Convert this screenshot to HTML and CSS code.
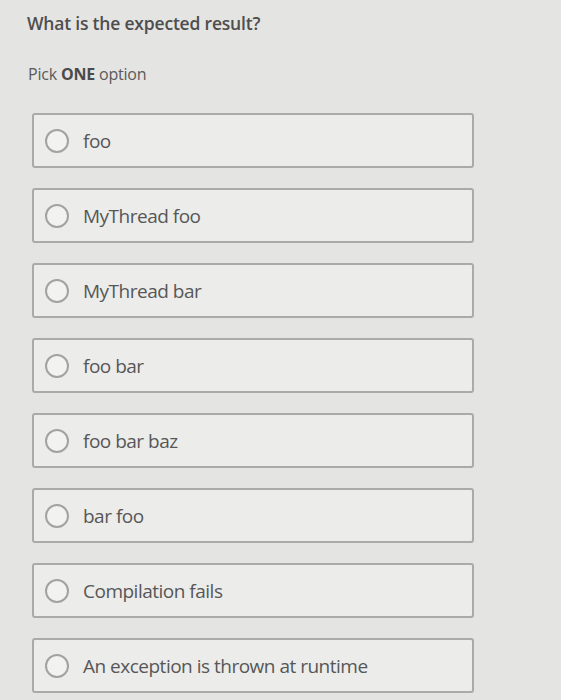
FILE: index.html
```html
<!DOCTYPE html>
<html>
<head>
<meta charset="utf-8">
<link rel="stylesheet" href="styles.css">
</head>
<body>
<div class="page">
  <h1 class="question">What is the expected result?</h1>
  <p class="hint">Pick <b>ONE</b> option</p>
  <div class="options">
    <label class="option"><span class="radio"></span><span class="label">foo</span></label>
    <label class="option"><span class="radio"></span><span class="label">MyThread foo</span></label>
    <label class="option"><span class="radio"></span><span class="label">MyThread bar</span></label>
    <label class="option"><span class="radio"></span><span class="label">foo bar</span></label>
    <label class="option"><span class="radio"></span><span class="label">foo bar baz</span></label>
    <label class="option"><span class="radio"></span><span class="label">bar foo</span></label>
    <label class="option"><span class="radio"></span><span class="label">Compilation fails</span></label>
    <label class="option"><span class="radio"></span><span class="label">An exception is thrown at runtime</span></label>
  </div>
</div>
</body>
</html>
```
FILE: styles.css
```css
html, body {
  margin: 0;
  padding: 0;
  background: #e4e4e2;
}
.page {
  font-family: "Open Sans", "Noto Sans", sans-serif;
  color: #5a5a5a;
  padding: 11px 0 0 27px;
  width: 470px;
}
.question {
  margin: 0;
  font-size: 17.5px;
  font-weight: 600;
  line-height: 24px;
  color: #4e4e4e;
  letter-spacing: -0.2px;
}
.hint {
  margin: 28px 0 0 1px;
  font-size: 16px;
  line-height: 22px;
  color: #5a5a5a;
  letter-spacing: -0.2px;
}
.hint b {
  font-weight: 700;
  color: #4a4a4a;
}
.options {
  margin-top: 28px;
  display: flex;
  flex-direction: column;
  gap: 20px;
  padding-left: 5px;
}
.option {
  display: flex;
  align-items: center;
  height: 55px;
  width: 442px;
  box-sizing: border-box;
  border: 2px solid #aaaaaa;
  border-radius: 3px;
  background: #ececeb;
  padding-left: 11px;
}
.radio {
  width: 24px;
  height: 24px;
  border: 2px solid #a2a2a2;
  border-radius: 50%;
  box-sizing: border-box;
  background: #f2f2f1;
  flex: none;
}
.label {
  margin-left: 14px;
  font-size: 19px;
  color: #575757;
  letter-spacing: -0.5px;
}
```
